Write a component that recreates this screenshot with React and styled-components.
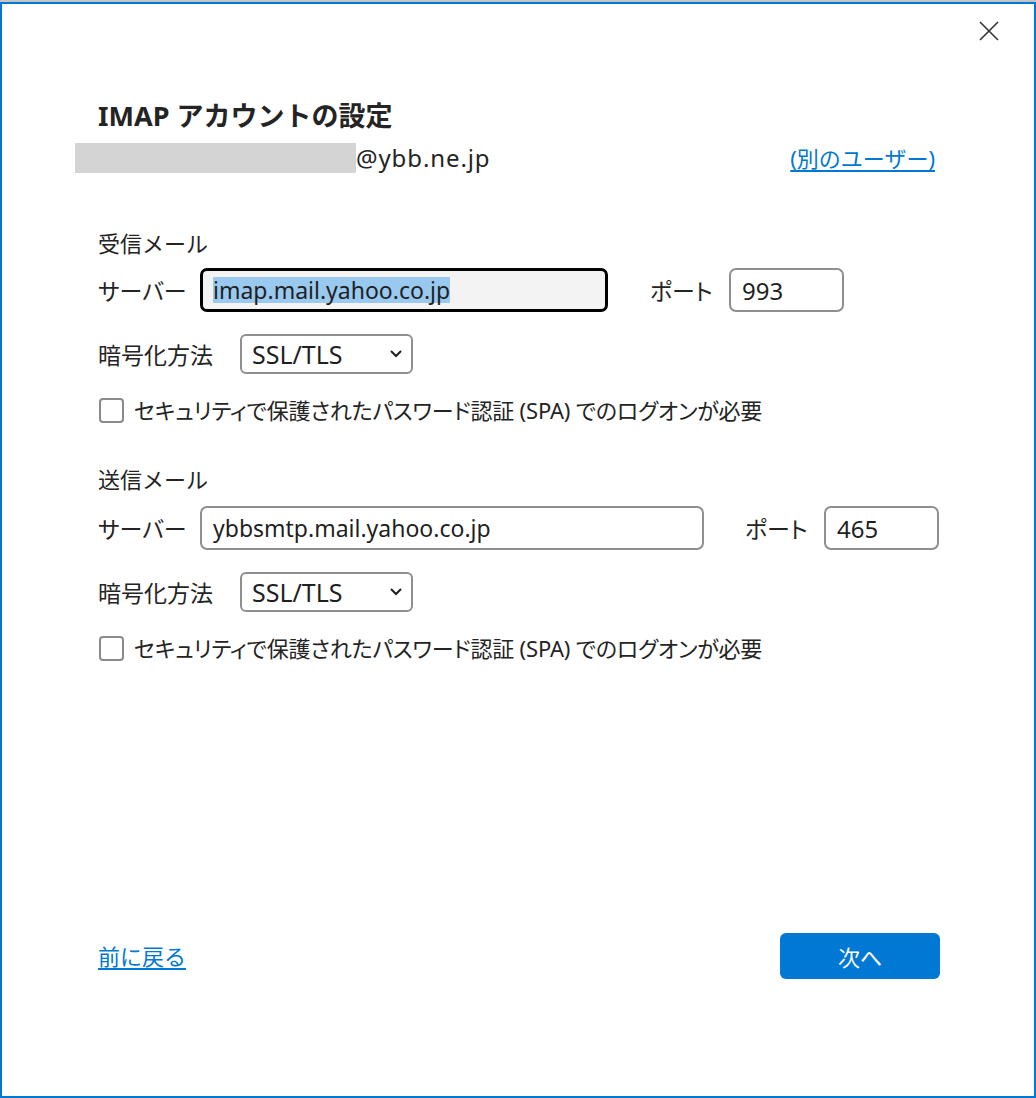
import React from "react";
import styled, { createGlobalStyle } from "styled-components";

const GlobalStyle = createGlobalStyle`
  html, body {
    margin: 0;
    padding: 0;
    background: #ffffff;
  }
  body {
    font-family: "Noto Sans", "Noto Sans CJK JP", sans-serif;
    color: #242424;
  }
  * {
    box-sizing: border-box;
  }
`;

const Page = styled.div`
  width: 1036px;
  height: 1098px;
  display: flex;
  flex-direction: column;
`;

// the window behind the dialog peeks out along the top edge
const BehindStrip = styled.div`
  height: 2px;
  background: #c4c4c4;
`;

const Dialog = styled.div`
  flex: 1;
  display: flex;
  flex-direction: column;
  border: 2px solid #0078d4;
  background: #ffffff;
`;

const CloseRow = styled.div`
  display: flex;
  justify-content: flex-end;
  padding: 11px 29px 0 0;
`;

const CloseButton = styled.button`
  width: 32px;
  height: 32px;
  display: flex;
  align-items: center;
  justify-content: center;
  border: none;
  background: transparent;
  padding: 0;
  cursor: pointer;
`;

const Body = styled.div`
  flex: 1;
  display: flex;
  flex-direction: column;
  padding: 0 94px 117px 96px;
`;

const Title = styled.h1`
  margin: 51px 0 0;
  font-size: 27px;
  line-height: 36px;
  font-weight: 700;
  color: #242424;
`;

const AccountRow = styled.div`
  margin: 9px 0 0 -23px;
  height: 30px;
  display: flex;
  align-items: center;
`;

const Redacted = styled.span`
  width: 281px;
  height: 30px;
  background: #d4d4d4;
`;

const Email = styled.span`
  font-size: 24px;
  line-height: 30px;
  letter-spacing: 0.9px;
  color: #242424;
`;

const Link = styled.a`
  font-size: 22px;
  line-height: 30px;
  color: #0078d4;
  text-decoration: underline;
  text-underline-offset: 3px;
  cursor: pointer;
  margin-left: ${(p) => (p.$pushRight ? "auto" : "0")};
  margin-right: ${(p) => (p.$pushRight ? "5px" : "0")};
`;

const SectionHeading = styled.div`
  margin-top: ${(p) => p.$top}px;
  font-size: 22px;
  line-height: 28px;
  color: #242424;
`;

const FieldRow = styled.div`
  margin-top: ${(p) => p.$top}px;
  display: flex;
  align-items: center;
`;

const Label = styled.span`
  font-size: 23px;
  font-feature-settings: "palt";
  color: #242424;
  width: ${(p) => (p.$width ? `${p.$width}px` : "auto")};
  flex-shrink: 0;
  margin-left: ${(p) => p.$gap || 0}px;
`;

const TextField = styled.div`
  width: ${(p) => p.$width}px;
  height: 44px;
  flex-shrink: 0;
  display: flex;
  align-items: center;
  padding: 0 ${(p) => (p.$focused ? 10 : 11)}px;
  border: ${(p) => (p.$focused ? "3px solid #000000" : "2px solid #8f8f8f")};
  border-radius: 7px;
  background: ${(p) => (p.$focused ? "#f3f3f3" : "#ffffff")};
  font-size: ${(p) => p.$size || 23}px;
  color: #1f1f1f;
  white-space: nowrap;
  overflow: hidden;
`;

const Selected = styled.span`
  background: #99c9ef;
  line-height: 26px;
`;

const Select = styled.div`
  width: 173px;
  height: 40px;
  display: flex;
  align-items: center;
  justify-content: space-between;
  padding: 0 9px 0 10px;
  border: 2px solid #8f8f8f;
  border-radius: 6px;
  font-size: 25px;
  color: #1f1f1f;
  cursor: pointer;
`;

const CheckRow = styled.label`
  margin-top: 24px;
  display: flex;
  align-items: center;
  gap: 10px;
  cursor: pointer;
`;

const CheckBox = styled.span`
  width: 25px;
  height: 25px;
  margin-left: 1px;
  border: 2px solid #8a8a8a;
  border-radius: 4px;
  background: #ffffff;
  flex-shrink: 0;
`;

const CheckText = styled.span`
  font-size: 22px;
  line-height: 25px;
  letter-spacing: -0.2px;
  font-feature-settings: "palt";
  color: #242424;
`;

const Footer = styled.div`
  margin-top: auto;
  display: flex;
  align-items: center;
  justify-content: space-between;
`;

const PrimaryButton = styled.button`
  width: 160px;
  height: 46px;
  border: none;
  border-radius: 6px;
  background: #0078d4;
  color: #ffffff;
  font-family: inherit;
  font-size: 22px;
  cursor: pointer;
`;

const CloseIcon = () => (
  <svg width="20" height="20" viewBox="0 0 20 20">
    <path d="M1 1 L19 19 M19 1 L1 19" stroke="#333333" strokeWidth="1.6" fill="none" />
  </svg>
);

const Chevron = () => (
  <svg width="12" height="8" viewBox="0 0 12 8">
    <path d="M1.5 1.5 L6 6 L10.5 1.5" stroke="#1f1f1f" strokeWidth="2" fill="none" strokeLinecap="round" />
  </svg>
);

const ServerSection = ({ heading, top, rowTop, server, focused, serverWidth, port, portGap }) => (
  <>
    <SectionHeading $top={top}>{heading}</SectionHeading>
    <FieldRow $top={rowTop}>
      <Label $width={102}>サーバー</Label>
      <TextField $width={serverWidth} $focused={focused}>
        {focused ? <Selected>{server}</Selected> : server}
      </TextField>
      <Label $gap={portGap} $width={79}>ポート</Label>
      <TextField $width={115} $size={24}>
        {port}
      </TextField>
    </FieldRow>
    <FieldRow $top={22}>
      <Label $width={142}>暗号化方法</Label>
      <Select>
        <span>SSL/TLS</span>
        <Chevron />
      </Select>
    </FieldRow>
    <CheckRow>
      <CheckBox />
      <CheckText>セキュリティで保護されたパスワード認証 (SPA) でのログオンが必要</CheckText>
    </CheckRow>
  </>
);

export default function App() {
  return (
    <Page>
      <GlobalStyle />
      <BehindStrip />
      <Dialog>
        <CloseRow>
          <CloseButton aria-label="閉じる">
            <CloseIcon />
          </CloseButton>
        </CloseRow>
        <Body>
          <Title>IMAP アカウントの設定</Title>
          <AccountRow>
            <Redacted />
            <Email>@ybb.ne.jp</Email>
            <Link $pushRight>(別のユーザー)</Link>
          </AccountRow>

          <ServerSection
            heading="受信メール"
            top={56}
            rowTop={11}
            server="imap.mail.yahoo.co.jp"
            focused
            serverWidth={408}
            port="993"
            portGap={42}
          />
          <ServerSection
            heading="送信メール"
            top={42}
            rowTop={13}
            server="ybbsmtp.mail.yahoo.co.jp"
            serverWidth={504}
            port="465"
            portGap={41}
          />

          <Footer>
            <Link>前に戻る</Link>
            <PrimaryButton>次へ</PrimaryButton>
          </Footer>
        </Body>
      </Dialog>
    </Page>
  );
}
